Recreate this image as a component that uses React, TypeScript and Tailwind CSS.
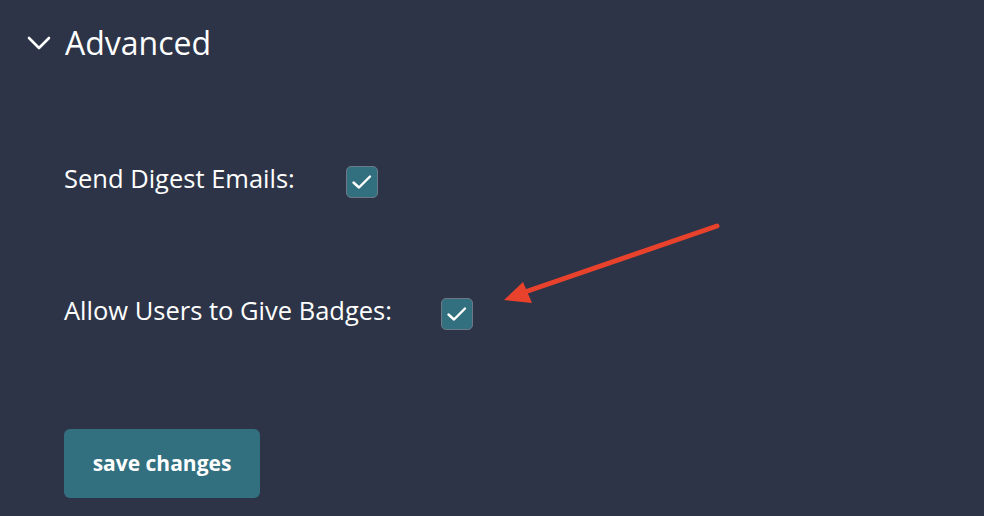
import React from "react";

function Check() {
  return (
    <div className="w-[32px] h-[32px] rounded-[5px] bg-[#33707f] border border-[#6b7a86] flex items-center justify-center">
      <svg width="22" height="18" viewBox="0 0 22 18" fill="none">
        <path d="M2.5 9.5 L8 14.5 L19 3.5" stroke="white" strokeWidth="2.4" strokeLinecap="round" strokeLinejoin="round" />
      </svg>
    </div>
  );
}

export default function App() {
  return (
    <div
      className="relative w-[984px] h-[516px] bg-[#2d3447] text-white overflow-hidden"
      style={{ fontFamily: '"Open Sans", "Noto Sans", sans-serif' }}
    >
      <div className="flex items-center pl-[27px] pt-[23px] gap-[14px]">
        <svg width="24" height="16" viewBox="0 0 24 16" fill="none">
          <path d="M2 3 L12 13 L22 3" stroke="white" strokeWidth="2.6" strokeLinecap="round" strokeLinejoin="round" />
        </svg>
        <span className="text-[32px] leading-[40px]">Advanced</span>
      </div>

      <div className="pl-[64px] pt-[103px] flex flex-col">
        <div className="flex items-center h-[32px]">
          <span className="text-[25.5px] leading-[32px] mr-[51px] mb-[8px]">Send Digest Emails:</span>
          <Check />
        </div>
        <div className="flex items-center h-[32px] mt-[100px]">
          <span className="text-[25.5px] leading-[32px] mr-[49px] mb-[8px]">Allow Users to Give Badges:</span>
          <Check />
        </div>
        <button className="mt-[99px] w-[196px] h-[69px] rounded-[6px] bg-[#33707f] text-white font-bold text-[21px] flex items-center justify-center">
          save changes
        </button>
      </div>

      <svg className="absolute left-0 top-0" width="984" height="516" viewBox="0 0 984 516">
        <line x1="717" y1="226" x2="522" y2="293" stroke="#e8422d" strokeWidth="5" strokeLinecap="round" />
        <polygon points="504,300 523,282 532,303" fill="#e8422d" />
      </svg>
    </div>
  );
}
